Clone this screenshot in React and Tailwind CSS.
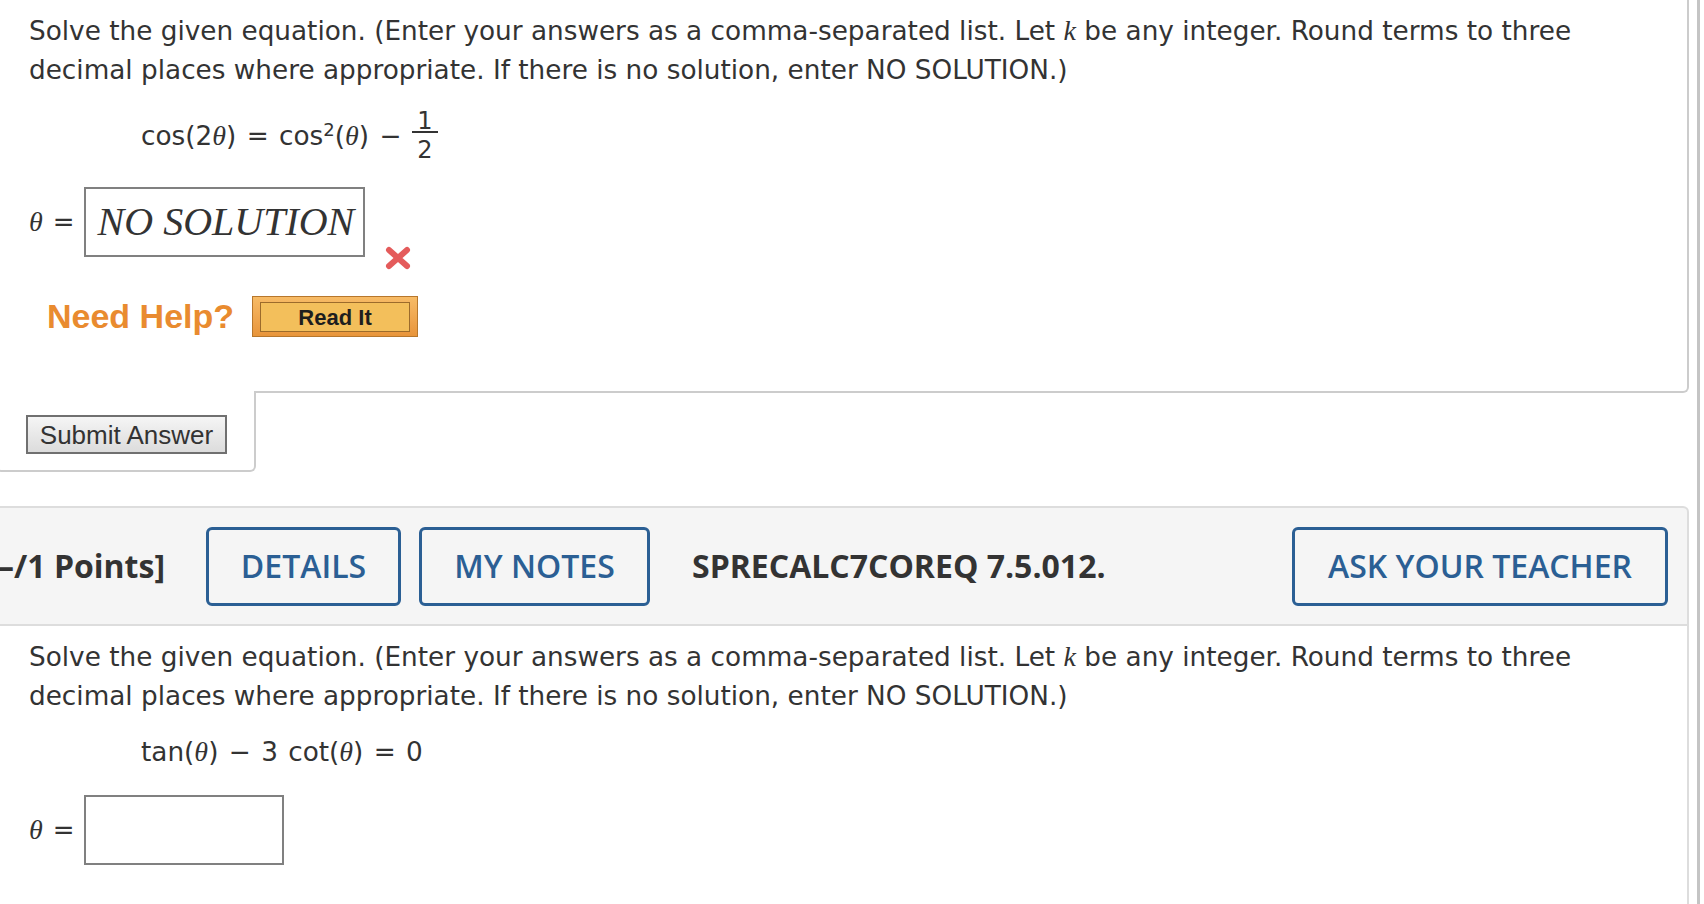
const serif = "font-['Liberation_Serif','Times_New_Roman',serif] italic";

function Theta() {
  return <span className={serif + " text-[28px]"}>θ</span>;
}

function Fraction() {
  return (
    <span className="inline-flex flex-col items-center text-[24px] leading-[24px]">
      <span>1</span>
      <span className="w-[26px] h-[2px] bg-[#333] -mt-[2px]"></span>
      <span className="mt-[5px]">2</span>
    </span>
  );
}

function Prompt() {
  return (
    <p className="text-[26.3px] leading-[39px]">
      Solve the given equation. (Enter your answers as a comma-separated list. Let{" "}
      <span className={serif + " text-[28px]"}>k</span> be any integer. Round terms to three
      <br />
      decimal places where appropriate. If there is no solution, enter NO SOLUTION.)
    </p>
  );
}

function AnswerRow({ value, wide, wrong }) {
  return (
    <div className="flex items-start">
      <div className="h-[70px] flex items-center">
        <Theta />
        <span className="ml-[10px] text-[26px]">=</span>
      </div>
      <div
        className={
          "ml-[9px] h-[70px] border-2 border-[#808080] flex items-center pl-[12px] text-[40px] text-[#333] " +
          serif +
          (wide ? " w-[281px]" : " w-[200px]")
        }
      >
        {value}
      </div>
      {wrong && (
        <svg className="ml-[19px] mt-[58px]" width="28" height="26" viewBox="0 0 28 26">
          <path d="M5 5 L23 21 M23 5 L5 21" stroke="#e45b5b" strokeWidth="6" strokeLinecap="round" />
        </svg>
      )}
    </div>
  );
}

export default function App() {
  return (
    <div className="w-[1700px] min-h-[904px] bg-white border-r-[3px] border-[#c4c4c4] overflow-hidden text-[#333] font-['DejaVu_Sans',Verdana,sans-serif]">
      {/* question 1 */}
      <div className="-ml-[4px] w-[1693px]">
        <div className="border-x-2 border-b-2 border-[#cccccc] rounded-br-[6px] pl-[31px] pt-[11px] pb-[49px]">
          <Prompt />
          <div className="mt-[19px] ml-[112px] flex items-center text-[26.3px] leading-[39px] whitespace-pre [word-spacing:2px]">
            <span>
              cos(2<Theta />) = cos<sup className="text-[18px]">2</sup>(<Theta />) −{" "}
            </span>
            <Fraction />
          </div>
          <div className="mt-[25px]">
            <AnswerRow value="NO SOLUTION" wide wrong />
          </div>
          <div className="mt-[20px] flex items-center">
            <span className="ml-[18px] font-['Liberation_Sans',Arial,sans-serif] font-bold text-[34px] text-[#e98b2f]">
              Need Help?
            </span>
            <div className="ml-[18px] w-[166px] h-[41px] border border-[#b7772c] bg-linear-to-b from-[#f7bb66] to-[#e8953b] px-[7px] pt-[5px] pb-[4px]">
              <div className="h-full border border-[#9c6b2b] bg-[#f3bf5b] flex items-center justify-center font-['Liberation_Sans',Arial,sans-serif] font-bold text-[22px] text-[#1e1e1e]">
                Read It
              </div>
            </div>
          </div>
        </div>
        <div className="-mt-[2px] w-[260px] h-[81px] border-x-2 border-b-2 border-[#cccccc] rounded-b-[6px] bg-white pt-[24px] pl-[28px]">
          <button className="w-[201px] h-[39px] border-2 border-[#707070] bg-linear-to-b from-[#f5f5f5] to-[#dcdcdc] text-[26px] leading-none font-['Liberation_Sans',Arial,sans-serif] text-[#333]">
            Submit Answer
          </button>
        </div>
      </div>

      {/* question 2 header */}
      <div className="mt-[34px] -ml-[4px] w-[1693px] h-[120px] border-y-2 border-r-2 border-[#dddddd] rounded-tr-[6px] bg-[#f5f5f5] flex items-center pr-[19px] font-['Open_Sans',sans-serif] text-[32px]">
        <div className="w-[169px] flex justify-end overflow-hidden whitespace-nowrap font-bold text-[#333]">
          <span>–/1 Points]</span>
        </div>
        <button className="ml-[41px] w-[195px] h-[79px] border-[3px] border-[#2b5f94] rounded-[6px] text-[#2b5f94] font-semibold">
          DETAILS
        </button>
        <button className="ml-[18px] w-[231px] h-[79px] border-[3px] border-[#2b5f94] rounded-[6px] text-[#2b5f94] font-semibold">
          MY NOTES
        </button>
        <span className="ml-[42px] font-bold text-[#333]">SPRECALC7COREQ 7.5.012.</span>
        <button className="ml-auto w-[376px] h-[79px] border-[3px] border-[#2b5f94] rounded-[6px] text-[#2b5f94] font-semibold">
          ASK YOUR TEACHER
        </button>
      </div>

      {/* question 2 */}
      <div className="-ml-[4px] w-[1693px] min-h-[300px] border-r-2 border-[#dddddd] pl-[33px] pt-[11px] pb-[40px]">
        <Prompt />
        <div className="mt-[16px] ml-[112px] text-[26.3px] leading-[39px] whitespace-pre [word-spacing:2px]">
          tan(<Theta />) − 3 cot(<Theta />) = 0
        </div>
        <div className="mt-[23px]">
          <AnswerRow value="" />
        </div>
      </div>
    </div>
  );
}
